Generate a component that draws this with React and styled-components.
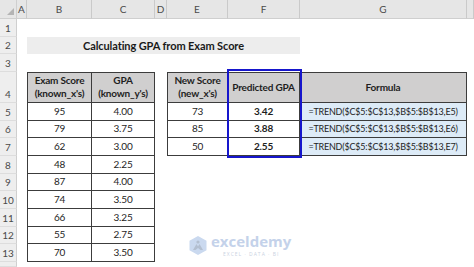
import React from "react";
import styled, { createGlobalStyle } from "styled-components";

const GlobalStyle = createGlobalStyle`
  html, body {
    margin: 0;
    padding: 0;
    background: #ffffff;
  }
  body {
    font-family: Lato, "Open Sans", sans-serif;
  }
`;

const ROW = "17.67px";
const LINE = "#3c3c3c";

const Sheet = styled.div`
  position: relative;
  display: grid;
  grid-template-columns: 17px 10px 65px 63px 12px 61px 72px 167px 1fr;
  grid-template-rows: 19px repeat(3, ${ROW}) 31px repeat(9, ${ROW}) 1fr;
  width: 474px;
  height: 267px;
  overflow: hidden;
  background: #ffffff;
`;

// ---- sheet chrome --------------------------------------------------
const Corner = styled.div`
  position: relative;
  grid-column: 1;
  grid-row: 1;
  background: #e6e6e6;
  border-right: 1px solid #cfcfcf;
  border-bottom: 1px solid #cfcfcf;

  &::after {
    content: "";
    position: absolute;
    right: 2px;
    bottom: 3px;
    border-style: solid;
    border-width: 0 0 7px 7px;
    border-color: transparent transparent #b4b4b4 transparent;
  }
`;

const ColHead = styled.div`
  grid-column: ${({ $col }) => $col};
  grid-row: 1;
  display: flex;
  align-items: center;
  justify-content: center;
  background: #e6e6e6;
  border-right: 1px solid #cacaca;
  border-bottom: 1px solid #cfcfcf;
  font-size: 10px;
  color: #4a4a4a;
`;

const RowHead = styled.div`
  grid-column: 1;
  grid-row: ${({ $row }) => $row};
  display: flex;
  align-items: flex-end;
  justify-content: center;
  padding-bottom: 2px;
  box-sizing: border-box;
  background: #eeeeee;
  border-right: 1px solid #cfcfcf;
  border-bottom: 1px solid #dddddd;
  font-size: 10px;
  line-height: 12px;
  color: #4a4a4a;
`;

// ---- cells -----------------------------------------------------------
const Title = styled.div`
  grid-column: 3 / 8;
  grid-row: 3;
  display: flex;
  align-items: center;
  justify-content: center;
  background: #ededed;
  font-size: 11px;
  font-weight: 700;
  color: #1a1a1a;
  letter-spacing: -0.1px;
`;

const Cell = styled.div`
  grid-column: ${({ $col }) => $col};
  grid-row: ${({ $row }) => $row};
  display: flex;
  align-items: center;
  justify-content: center;
  text-align: center;
  white-space: nowrap;
  overflow: hidden;
  font-size: ${({ $small }) => ($small ? "9px" : "10px")};
  line-height: 13px;
  letter-spacing: -0.2px;
  color: #1e1e1e;
  font-weight: ${({ $bold }) => ($bold ? 700 : 400)};
  background: ${({ $fill }) => $fill || "transparent"};
  border-right: 1px solid ${LINE};
  border-bottom: 1px solid ${LINE};
  border-left: ${({ $left }) => ($left ? `1px solid ${LINE}` : "none")};
  border-top: ${({ $top }) => ($top ? `1px solid ${LINE}` : "none")};
`;

const Selection = styled.div`
  grid-column: 7;
  grid-row: 5 / 9;
  margin: -3px -2px -2px -1px;
  border: 2px solid #1616cc;
  pointer-events: none;
  z-index: 2;
`;

// ---- watermark -------------------------------------------------------
const Watermark = styled.div`
  position: absolute;
  left: 188px;
  top: 233px;
  display: flex;
  align-items: center;
  gap: 3px;
  pointer-events: none;
`;

const Brand = styled.div`
  display: flex;
  flex-direction: column;
  align-items: center;
  gap: 2px;
`;

const BrandName = styled.span`
  font-family: "Open Sans", sans-serif;
  font-weight: 700;
  font-size: 15px;
  line-height: 17px;
  color: #c4d2ea;
`;

const BrandTag = styled.span`
  font-family: "Open Sans", sans-serif;
  font-size: 5px;
  line-height: 5px;
  letter-spacing: 1px;
  color: #cbd3df;
`;

function Logo() {
  return (
    <svg width="20" height="21" viewBox="0 0 20 21">
      <path d="M10 1 L18.5 5.8 L18.5 15.2 L10 20 L1.5 15.2 L1.5 5.8 Z" fill="#cad9ef" />
      <path d="M5 15 L8.5 9 L10 11.5 L11.5 9 L15 15 L12.5 15 L10 13 L7.5 15 Z" fill="#b3bfd0" />
      <circle cx="10" cy="7" r="1.6" fill="#b3bfd0" />
    </svg>
  );
}

const leftData = [
  ["95", "4.00"],
  ["79", "3.75"],
  ["62", "3.00"],
  ["48", "2.25"],
  ["87", "4.00"],
  ["74", "3.50"],
  ["66", "3.25"],
  ["55", "2.75"],
  ["70", "3.50"]
];

const rightData = [
  ["73", "3.42"],
  ["85", "3.88"],
  ["50", "2.55"]
];

const HEAD_FILL = "#d0cfcf";
const FORMULA_FILL = "#ddebf7";

export default function App() {
  const letters = ["A", "B", "C", "D", "E", "F", "G", ""];
  const rows = Array.from({ length: 14 }, (_, i) => i + 1);

  return (
    <>
      <GlobalStyle />
      <Sheet>
        <Corner />
        {letters.map((l, i) => (
          <ColHead key={i} $col={i + 2}>
            {l}
          </ColHead>
        ))}
        {rows.map((r) => (
          <RowHead key={r} $row={r + 1}>
            {r < 14 ? r : ""}
          </RowHead>
        ))}

        <Title>Calculating GPA from Exam Score</Title>

        {/* left table */}
        <Cell $col={3} $row={5} $top $left $bold $fill={HEAD_FILL}>
          Exam Score
          <br />
          (known_x's)
        </Cell>
        <Cell $col={4} $row={5} $top $bold $fill={HEAD_FILL}>
          GPA
          <br />
          (known_y's)
        </Cell>
        {leftData.map(([x, y], i) => (
          <React.Fragment key={i}>
            <Cell $col={3} $row={i + 6} $left>
              {x}
            </Cell>
            <Cell $col={4} $row={i + 6}>
              {y}
            </Cell>
          </React.Fragment>
        ))}

        {/* right table */}
        <Cell $col={6} $row={5} $top $left $bold $fill={HEAD_FILL}>
          New Score
          <br />
          (new_x's)
        </Cell>
        <Cell $col={7} $row={5} $top $bold $fill={HEAD_FILL}>
          Predicted GPA
        </Cell>
        <Cell $col={8} $row={5} $top $bold $fill={HEAD_FILL}>
          Formula
        </Cell>
        {rightData.map(([x, y], i) => (
          <React.Fragment key={i}>
            <Cell $col={6} $row={i + 6} $left>
              {x}
            </Cell>
            <Cell $col={7} $row={i + 6} $bold>
              {y}
            </Cell>
            <Cell $col={8} $row={i + 6} $fill={FORMULA_FILL} $small>
              {`=TREND($C$5:$C$13,$B$5:$B$13,E${i + 5})`}
            </Cell>
          </React.Fragment>
        ))}
        <Selection />

        <Watermark>
          <Logo />
          <Brand>
            <BrandName>exceldemy</BrandName>
            <BrandTag>EXCEL · DATA · BI</BrandTag>
          </Brand>
        </Watermark>
      </Sheet>
    </>
  );
}
